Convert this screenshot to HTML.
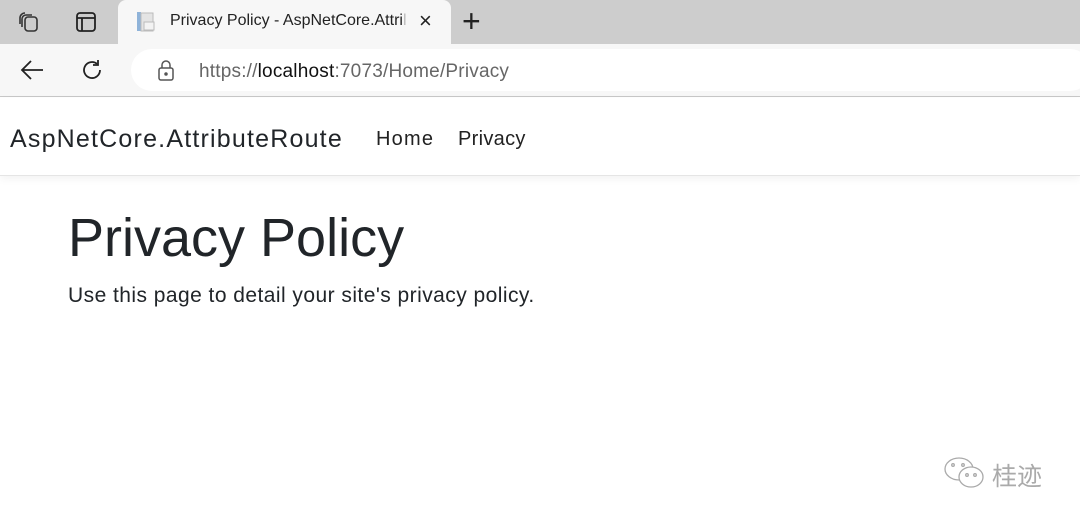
<!DOCTYPE html>
<html><head><meta charset="utf-8"><style>
*{margin:0;padding:0;box-sizing:border-box}
body{width:1080px;height:522px;overflow:hidden;background:#fff;font-family:"Liberation Sans",sans-serif;position:relative;color:#212529}
.tabbar{position:absolute;left:0;top:0;width:1080px;height:44px;background:#cdcdcd}
.tab{position:absolute;left:118px;top:0;width:333px;height:44px;background:#f7f7f7;border-radius:8px 8px 0 0}
.toolbar{position:absolute;left:0;top:44px;width:1080px;height:53px;background:#f7f7f7;border-bottom:1px solid #c8c8c8}
.url{position:absolute;left:131px;top:5px;width:960px;height:42px;background:#fff;border-radius:21px}
.nav{position:absolute;left:0;top:98px;width:1080px;height:78px;background:#fff;border-bottom:1px solid #e5e5e5;box-shadow:0 3px 8px rgba(0,0,0,.05)}
.t{position:absolute;white-space:nowrap}
</style></head><body>
<div class="tabbar">
<svg class="t" style="left:17px;top:11px" width="24" height="24" viewBox="0 0 24 24" fill="none" stroke="#333" stroke-width="1.6"><rect x="8" y="6" width="12" height="14" rx="3"/><path d="M5 16V8a4 4 0 0 1 4-4h6"/><path d="M3 13V7a5 5 0 0 1 5-5"/></svg>
<svg class="t" style="left:75px;top:11px" width="22" height="22" viewBox="0 0 22 22" fill="none" stroke="#222" stroke-width="1.8"><rect x="2" y="2" width="18" height="18" rx="3"/><path d="M2 7h18M7 7v13"/></svg>
<div class="tab">
<svg class="t" style="left:17px;top:11px" width="22" height="22" viewBox="0 0 22 22"><rect x="2" y="1" width="4" height="19" fill="#8fb3d9"/><rect x="6" y="2" width="12" height="18" fill="#e4e4e4" stroke="#bbb"/><rect x="9" y="11" width="10" height="8" fill="#f3f3f3" stroke="#bbb"/></svg>
<div class="t" style="left:52px;top:12px;font-size:16px;color:#222">Privacy Policy - AspNetCore.Attri<span style="color:#bbb">l</span></div>
<div class="t" style="left:301px;top:8px;font-size:22px;color:#222">×</div>
</div>
<div class="t" style="left:462px;top:3px;font-size:32px;font-weight:300;color:#222">+</div>
</div>
<div class="toolbar">
<svg class="t" style="left:19px;top:14px" width="26" height="24" viewBox="0 0 26 24" fill="none" stroke="#222" stroke-width="1.8"><path d="M24 12H3M12 3l-9 9 9 9"/></svg>
<svg class="t" style="left:80px;top:14px" width="24" height="24" viewBox="0 0 24 24" fill="none" stroke="#222" stroke-width="1.8"><path d="M20 12a8 8 0 1 1-3-6.2"/><path d="M18 2v5h-5"/></svg>
<div class="url">
<svg class="t" style="left:26px;top:11px" width="18" height="22" viewBox="0 0 18 22" fill="none" stroke="#555" stroke-width="1.5"><rect x="2" y="8" width="14" height="12" rx="2"/><path d="M5 8V5a4 4 0 0 1 8 0v3"/><circle cx="9" cy="14" r="1" fill="#555"/></svg>
<div class="t" style="left:68px;top:12px;font-size:19px;letter-spacing:.2px;color:#666">https://<span style="color:#111">localhost</span>:7073/Home/Privacy</div>
</div>
</div>
<div class="nav">
<div class="t" style="left:10px;top:27px;font-size:25px;letter-spacing:1.2px;color:#212529">AspNetCore.AttributeRoute</div>
<div class="t" style="left:376px;top:30px;font-size:20px;letter-spacing:1.2px;color:#222">Home</div>
<div class="t" style="left:458px;top:30px;font-size:20px;letter-spacing:.3px;color:#222">Privacy</div>
</div>
<div class="t" style="left:68px;top:207px;font-size:54px;color:#212529">Privacy Policy</div>
<div class="t" style="left:68px;top:284px;font-size:21px;letter-spacing:.45px;color:#212529">Use this page to detail your site's privacy policy.</div>
<svg class="t" style="left:942px;top:455px" width="46" height="36" viewBox="0 0 46 36" fill="#fff" stroke="#aaa" stroke-width="1.3"><ellipse cx="17" cy="14" rx="14" ry="11"/><ellipse cx="29" cy="22" rx="12" ry="10"/><circle cx="11" cy="10" r="1.3"/><circle cx="21" cy="10" r="1.3"/><circle cx="25" cy="20" r="1.3"/><circle cx="33" cy="20" r="1.3"/></svg>
<div class="t" style="left:992px;top:457px;font-size:25px;color:#aaa;font-family:'Liberation Sans','Noto Sans CJK SC',sans-serif">桂迹</div>
</body></html>
